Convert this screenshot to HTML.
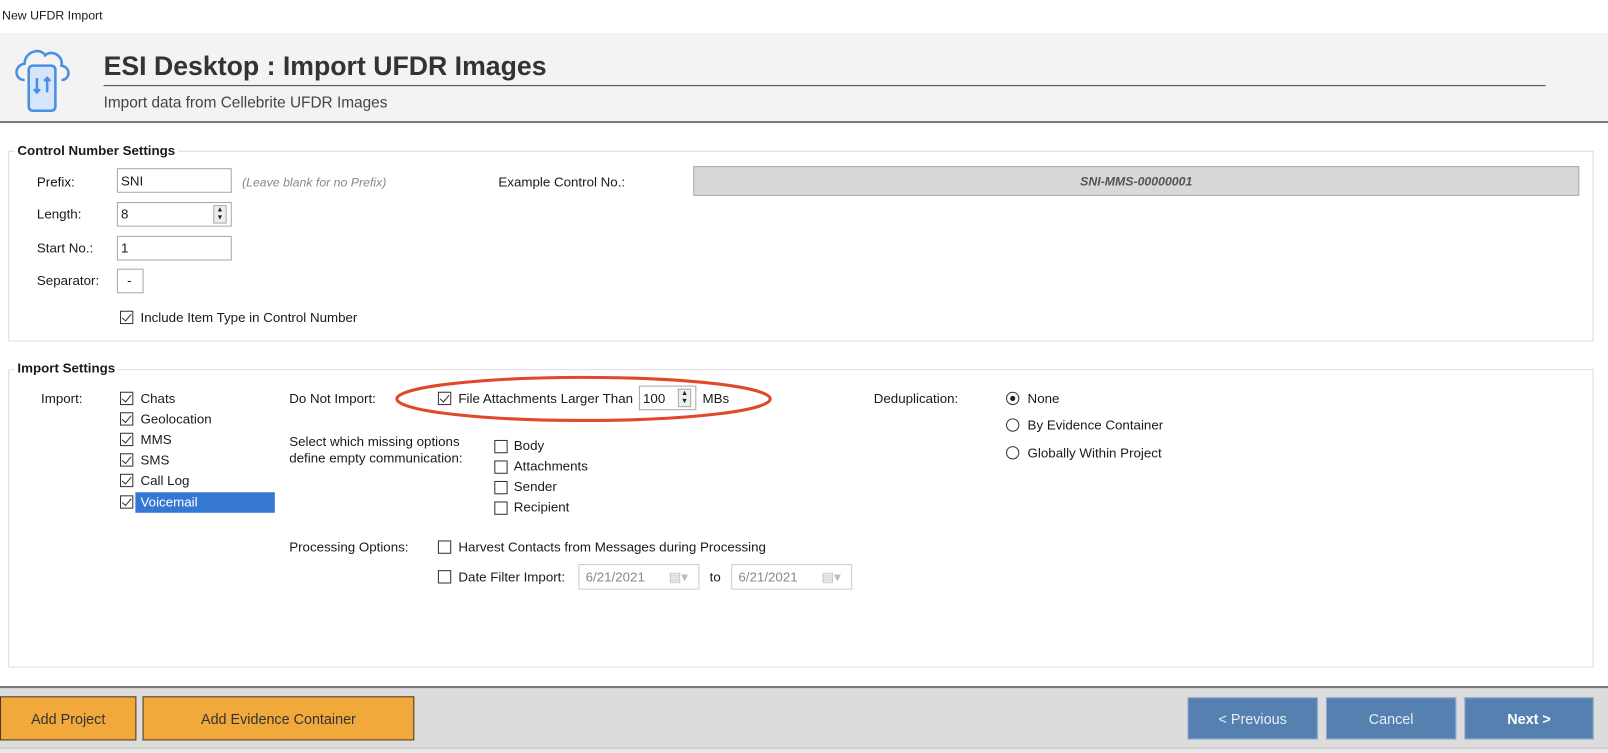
<!DOCTYPE html>
<html><head><meta charset="utf-8"><style>
*{margin:0;padding:0;box-sizing:border-box}
body{width:1608px;height:752px;position:relative;background:#fff;font-family:"Liberation Sans",sans-serif;font-size:13px;color:#1a1a1a;overflow:hidden}
#w{position:absolute;left:0;top:0;width:1568px;height:734px;transform:scale(1.02551);transform-origin:0 0}
.a{position:absolute;white-space:nowrap;line-height:16px}
.b{font-weight:bold}
.box{position:absolute;border:1px solid #a8a8a8;background:#fff}
.cb{position:absolute;width:13px;height:13px;border:1px solid #333;background:#fff}
.cb.c::after{content:"";position:absolute;left:3px;top:0px;width:4px;height:8px;border:solid #333;border-width:0 1.5px 1.5px 0;transform:rotate(40deg)}
.rd{position:absolute;width:13px;height:13px;border:1px solid #333;border-radius:50%;background:#fff}
.rd.c::after{content:"";position:absolute;left:3px;top:3px;width:5px;height:5px;border-radius:50%;background:#222}
.grp{position:absolute;border:1px solid #dcdcdc}
.spin{position:absolute;width:13px;border:1px solid #aaa;background:#eee;font-size:7px;line-height:8px;text-align:center;color:#222}
.btn{position:absolute;display:flex;align-items:center;justify-content:center;font-size:14px}
.or{background:#f2a93b;border:1px solid #4a3a20;color:#333}
.bl{background:#5580b0;border:1px solid #8aa8cc;color:#e8eef6}
</style></head><body><div id="w">
<div class="a" style="left:2px;top:7px;font-size:12px">New UFDR Import</div>
<div style="position:absolute;left:0;top:32px;width:1568px;height:88px;background:#f3f3f3;border-bottom:2px solid #7a7a7a"></div>
<svg style="position:absolute;left:10px;top:42px" width="62" height="72" viewBox="0 0 62 72" fill="none" stroke="#4a90e2" stroke-width="2.5">
<path d="M14 36 C4 36 3 22 14 20 C14 8 30 4 34 12 C40 6 52 12 50 22 C60 24 58 36 50 36"/>
<rect x="18" y="22" width="26" height="44" rx="4" fill="#d6e6fa"/>
<path d="M26 34 v14 M23 45 l3 3 3-3 M36 48 v-14 M33 37 l3-3 3 3"/>
</svg>
<div class="a b" style="left:101px;top:48px;font-size:26px;line-height:32px;color:#333">ESI Desktop : Import UFDR Images</div>
<div style="position:absolute;left:101px;top:83px;width:1406px;height:1px;background:#444"></div>
<div class="a" style="left:101px;top:92px;font-size:15px;line-height:18px;color:#444">Import data from Cellebrite UFDR Images</div>

<div class="grp" style="left:8px;top:147px;width:1546px;height:186px"></div>
<div class="a b" style="left:14px;top:139px;background:#fff;padding:0 3px">Control Number Settings</div>
<div class="a" style="left:36px;top:170px;color:#111">Prefix:</div>
<div class="box" style="left:114px;top:164px;width:112px;height:24px"></div><div class="a" style="left:118px;top:169px">SNI</div>
<div class="a" style="left:236px;top:170px;font-style:italic;color:#888;font-size:12px">(Leave blank for no Prefix)</div>
<div class="a" style="left:36px;top:201px">Length:</div>
<div class="box" style="left:114px;top:197px;width:112px;height:24px"></div><div class="a" style="left:118px;top:201px">8</div>
<div class="spin" style="left:208px;top:200px;height:18px">▲<br>▼</div>
<div class="a" style="left:36px;top:234px">Start No.:</div>
<div class="box" style="left:114px;top:230px;width:112px;height:24px"></div><div class="a" style="left:118px;top:234px">1</div>
<div class="a" style="left:36px;top:266px">Separator:</div>
<div class="box" style="left:114px;top:262px;width:26px;height:24px"></div><div class="a" style="left:124px;top:266px">-</div>
<div class="cb c" style="left:117px;top:303px"></div><div class="a" style="left:137px;top:302px">Include Item Type in Control Number</div>
<div class="a" style="left:486px;top:170px">Example Control No.:</div>
<div style="position:absolute;left:676px;top:162px;width:864px;height:29px;background:#d8d8d8;border:1px solid #aaa"></div>
<div class="a b" style="left:676px;top:169px;width:864px;text-align:center;font-style:italic;color:#555;font-size:12px">SNI-MMS-00000001</div>

<div class="grp" style="left:8px;top:360px;width:1546px;height:291px"></div>
<div class="a b" style="left:14px;top:351px;background:#fff;padding:0 3px">Import Settings</div>
<div class="a" style="left:40px;top:381px">Import:</div>
<div style="position:absolute;left:132px;top:480px;width:136px;height:20px;background:#3478d4"></div>
<div class="cb c" style="left:117px;top:382px"></div><div class="a" style="left:137px;top:381px">Chats</div>
<div class="cb c" style="left:117px;top:402px"></div><div class="a" style="left:137px;top:401px">Geolocation</div>
<div class="cb c" style="left:117px;top:422px"></div><div class="a" style="left:137px;top:421px">MMS</div>
<div class="cb c" style="left:117px;top:442px"></div><div class="a" style="left:137px;top:441px">SMS</div>
<div class="cb c" style="left:117px;top:462px"></div><div class="a" style="left:137px;top:461px">Call Log</div>
<div class="cb c" style="left:117px;top:483px"></div><div class="a" style="left:137px;top:482px;color:#fff">Voicemail</div>

<div class="a" style="left:282px;top:381px">Do Not Import:</div>
<div class="cb c" style="left:427px;top:382px"></div><div class="a" style="left:447px;top:381px">File Attachments Larger Than</div>
<div class="box" style="left:623px;top:376px;width:56px;height:24px"></div><div class="a" style="left:627px;top:381px">100</div>
<div class="spin" style="left:661px;top:379px;height:18px">▲<br>▼</div>
<div class="a" style="left:685px;top:381px">MBs</div>
<svg style="position:absolute;left:380px;top:362px" width="380" height="54"><ellipse cx="189" cy="27" rx="182" ry="21" fill="none" stroke="#e0482a" stroke-width="3"/></svg>
<div class="a" style="left:282px;top:423px">Select which missing options<br>define empty communication:</div>
<div class="cb" style="left:482px;top:429px"></div><div class="a" style="left:501px;top:427px">Body</div>
<div class="cb" style="left:482px;top:449px"></div><div class="a" style="left:501px;top:447px">Attachments</div>
<div class="cb" style="left:482px;top:469px"></div><div class="a" style="left:501px;top:467px">Sender</div>
<div class="cb" style="left:482px;top:489px"></div><div class="a" style="left:501px;top:487px">Recipient</div>
<div class="a" style="left:282px;top:526px">Processing Options:</div>
<div class="cb" style="left:427px;top:527px"></div><div class="a" style="left:447px;top:526px">Harvest Contacts from Messages during Processing</div>
<div class="cb" style="left:427px;top:556px"></div><div class="a" style="left:447px;top:555px">Date Filter Import:</div>
<div class="box" style="left:564px;top:550px;width:118px;height:25px;border-color:#ccc"></div><div class="a" style="left:571px;top:555px;color:#888">6/21/2021</div><div class="a" style="left:652px;top:555px;color:#bbb">▤▾</div>
<div class="a" style="left:692px;top:555px">to</div>
<div class="box" style="left:713px;top:550px;width:118px;height:25px;border-color:#ccc"></div><div class="a" style="left:720px;top:555px;color:#888">6/21/2021</div><div class="a" style="left:801px;top:555px;color:#bbb">▤▾</div>

<div class="a" style="left:852px;top:381px">Deduplication:</div>
<div class="rd c" style="left:981px;top:382px"></div><div class="a" style="left:1002px;top:381px">None</div>
<div class="rd" style="left:981px;top:408px"></div><div class="a" style="left:1002px;top:407px">By Evidence Container</div>
<div class="rd" style="left:981px;top:435px"></div><div class="a" style="left:1002px;top:434px">Globally Within Project</div>

<div style="position:absolute;left:0;top:669px;width:1568px;height:65px;background:#dcdcdc;border-top:2px solid #777"></div>
<div style="position:absolute;left:0;top:729px;width:1568px;height:5px;background:#e8e8e8;border-top:1px solid #bbb"></div>
<div class="btn or" style="left:0;top:679px;width:133px;height:43px">Add Project</div>
<div class="btn or" style="left:139px;top:679px;width:265px;height:43px">Add Evidence Container</div>
<div class="btn bl" style="left:1158px;top:680px;width:127px;height:41px">&lt; Previous</div>
<div class="btn bl" style="left:1293px;top:680px;width:127px;height:41px">Cancel</div>
<div class="btn bl b" style="left:1428px;top:680px;width:126px;height:41px;color:#fff">Next &gt;</div>
</div></body></html>
